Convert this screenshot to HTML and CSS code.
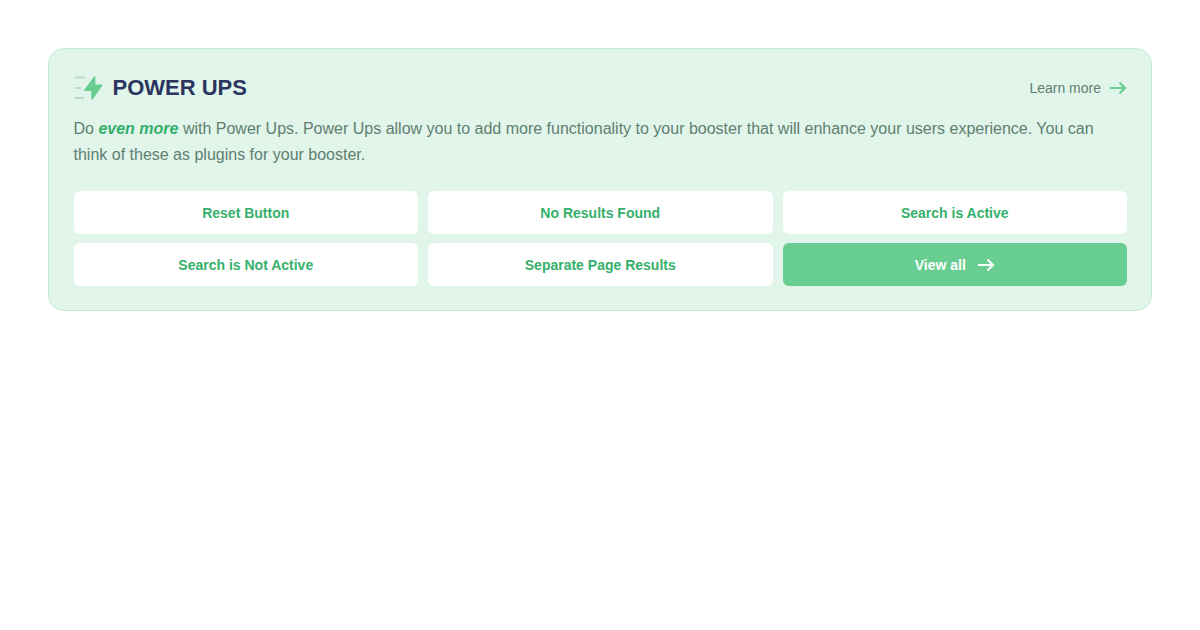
FILE: index.html
```html
<!DOCTYPE html>
<html lang="en">
<head>
    <meta charset="UTF-8">
    <meta name="viewport" content="width=device-width, initial-scale=1.0">
    <title>Power Ups</title>
    <link rel="stylesheet" href="styles.css">
</head>
<body>

    <section class="panel">
        <div class="panel-head">
            <h2 class="panel-title">
                <svg class="bolt" width="30" height="26" viewBox="0 0 30 26" aria-hidden="true">
                    <path class="bolt-lines" d="M1 2.500h10M1 13h6M1 23h9"/>
                    <path class="bolt-shape" d="M20.200 1.600c.5-.6 1.200-.2 1.200 .5v7.500h6c.8 0 1.200 .8 .7 1.400L18.500 24.600c-.5 .6-1.300 .2-1.300-.5v-8h-6.200c-.8 0-1.200-.8-.7-1.400z"/>
                </svg>
                <span>POWER UPS</span>
            </h2>
            <a class="learn-more" href="#">
                Learn more
                <svg width="18" height="14" viewBox="0 0 18 14" aria-hidden="true">
                    <path d="M1 7h15M10.500 1.500L16 7l-5.500 5.500"/>
                </svg>
            </a>
        </div>

        <p class="panel-text">Do <em>even more</em> with Power Ups. Power Ups allow you to add more functionality to your booster that will enhance your users experience. You can think of these as plugins for your booster.</p>

        <div class="links">
            <a class="link" href="#">Reset Button</a>
            <a class="link" href="#">No Results Found</a>
            <a class="link" href="#">Search is Active</a>
            <a class="link" href="#">Search is Not Active</a>
            <a class="link" href="#">Separate Page Results</a>
            <a class="link link-all" href="#">
                View all
                <svg width="18" height="14" viewBox="0 0 18 14" aria-hidden="true">
                    <path d="M1 7h15M10.500 1.500L16 7l-5.500 5.500"/>
                </svg>
            </a>
        </div>
    </section>

</body>
</html>
```

FILE: styles.css
```css
body {
    font-family: Helvetica, sans-serif;
    margin: 0;
    padding: 48px;
    background-color: #fff;
}

a {
    text-decoration: none;
}

.panel {
    padding: 24px 24px 24px 24.500px;
    background-color: #e1f5ea;
    border: 1px solid #c3ebd4;
    border-radius: 16px;
}

.panel-head {
    display: flex;
    align-items: center;
    justify-content: space-between;
    height: 30px;
}

.panel-title {
    display: flex;
    align-items: center;
    gap: 9px;
    margin: 0;
    color: #2c3560;
    font-size: 22px;
    font-weight: 700;
    line-height: 30px;
}

.bolt-lines {
    fill: none;
    stroke: #b5dcc8;
    stroke-width: 2;
}

.bolt-shape {
    fill: #68cd90;
}

.learn-more {
    display: flex;
    align-items: center;
    gap: 8px;
    color: #5f7f70;
    font-size: 14px;
}

.learn-more svg path,
.link-all svg path {
    fill: none;
    stroke: #68cd90;
    stroke-width: 2;
}

.panel-text {
    margin: 13px 0 23px;
    color: #5f7f70;
    font-size: 16px;
    line-height: 26px;
}

.panel-text em {
    color: #35b06c;
    font-weight: 700;
}

.links {
    display: grid;
    grid-template-columns: repeat(3, 1fr);
    gap: 9px 10px;
}

.link {
    display: flex;
    align-items: center;
    justify-content: center;
    gap: 11px;
    height: 43px;
    background-color: #fff;
    border-radius: 6px;
    color: #35b06c;
    font-size: 14px;
    font-weight: 700;
}

.link-all {
    background-color: #68cd90;
    color: #fff;
}

.link-all svg path {
    stroke: #fff;
}
```
